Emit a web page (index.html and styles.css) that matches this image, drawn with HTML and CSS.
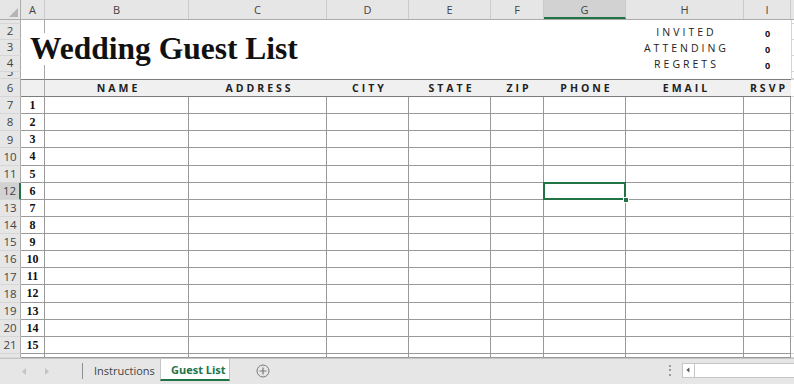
FILE: index.html
```html
<!DOCTYPE html>
<html>
<head>
<meta charset="utf-8">
<title>Wedding Guest List</title>
<link rel="stylesheet" href="styles.css">
</head>
<body>
<div class="sheet">
  <div class="grid colhead">
    <div class="corner"><svg width="20" height="19" viewBox="0 0 20 19"><polygon points="18,8 18,17 9,17" fill="#b4b4b4"/></svg></div>
    <div>A</div><div>B</div><div>C</div><div>D</div><div>E</div><div>F</div><div class="sel">G</div><div>H</div><div>I</div><div class="j"></div>
  </div>

  <div class="grid top">
    <div class="rh r1">1</div>
    <div class="rh r2">2</div>
    <div class="rh r3">3</div>
    <div class="rh r4">4</div>
    <div class="rh r5">5</div>
    <div class="title"><h1>Wedding Guest List</h1></div>
    <div class="lbl r2">INVITED</div>
    <div class="lbl r3">ATTENDING</div>
    <div class="lbl r4">REGRETS</div>
    <div class="val r2">0</div>
    <div class="val r3">0</div>
    <div class="val r4">0</div>
    <div class="jc r1"></div>
    <div class="jc r2"></div>
    <div class="jc r3"></div>
    <div class="jc r4"></div>
    <div class="jc r5"></div>
  </div>

  <div class="grid hdr">
    <div class="rh">6</div>
    <div class="hc a"></div>
    <div class="hc">NAME</div>
    <div class="hc">ADDRESS</div>
    <div class="hc">CITY</div>
    <div class="hc">STATE</div>
    <div class="hc">ZIP</div>
    <div class="hc">PHONE</div>
    <div class="hc">EMAIL</div>
    <div class="hc">RSVP</div>
    <div class="hc j"></div>
  </div>

  <div class="grid drow"><div class="rh">7</div><div class="c num">1</div><div class="c"></div><div class="c"></div><div class="c"></div><div class="c"></div><div class="c"></div><div class="c"></div><div class="c"></div><div class="c"></div><div class="c j"></div></div>
  <div class="grid drow"><div class="rh">8</div><div class="c num">2</div><div class="c"></div><div class="c"></div><div class="c"></div><div class="c"></div><div class="c"></div><div class="c"></div><div class="c"></div><div class="c"></div><div class="c j"></div></div>
  <div class="grid drow"><div class="rh">9</div><div class="c num">3</div><div class="c"></div><div class="c"></div><div class="c"></div><div class="c"></div><div class="c"></div><div class="c"></div><div class="c"></div><div class="c"></div><div class="c j"></div></div>
  <div class="grid drow"><div class="rh">10</div><div class="c num">4</div><div class="c"></div><div class="c"></div><div class="c"></div><div class="c"></div><div class="c"></div><div class="c"></div><div class="c"></div><div class="c"></div><div class="c j"></div></div>
  <div class="grid drow"><div class="rh">11</div><div class="c num">5</div><div class="c"></div><div class="c"></div><div class="c"></div><div class="c"></div><div class="c"></div><div class="c"></div><div class="c"></div><div class="c"></div><div class="c j"></div></div>
  <div class="grid drow"><div class="rh selrow">12</div><div class="c num">6</div><div class="c"></div><div class="c"></div><div class="c"></div><div class="c"></div><div class="c"></div><div class="c active"><span class="handle"></span></div><div class="c"></div><div class="c"></div><div class="c j"></div></div>
  <div class="grid drow"><div class="rh">13</div><div class="c num">7</div><div class="c"></div><div class="c"></div><div class="c"></div><div class="c"></div><div class="c"></div><div class="c"></div><div class="c"></div><div class="c"></div><div class="c j"></div></div>
  <div class="grid drow"><div class="rh">14</div><div class="c num">8</div><div class="c"></div><div class="c"></div><div class="c"></div><div class="c"></div><div class="c"></div><div class="c"></div><div class="c"></div><div class="c"></div><div class="c j"></div></div>
  <div class="grid drow"><div class="rh">15</div><div class="c num">9</div><div class="c"></div><div class="c"></div><div class="c"></div><div class="c"></div><div class="c"></div><div class="c"></div><div class="c"></div><div class="c"></div><div class="c j"></div></div>
  <div class="grid drow"><div class="rh">16</div><div class="c num">10</div><div class="c"></div><div class="c"></div><div class="c"></div><div class="c"></div><div class="c"></div><div class="c"></div><div class="c"></div><div class="c"></div><div class="c j"></div></div>
  <div class="grid drow"><div class="rh">17</div><div class="c num">11</div><div class="c"></div><div class="c"></div><div class="c"></div><div class="c"></div><div class="c"></div><div class="c"></div><div class="c"></div><div class="c"></div><div class="c j"></div></div>
  <div class="grid drow"><div class="rh">18</div><div class="c num">12</div><div class="c"></div><div class="c"></div><div class="c"></div><div class="c"></div><div class="c"></div><div class="c"></div><div class="c"></div><div class="c"></div><div class="c j"></div></div>
  <div class="grid drow"><div class="rh">19</div><div class="c num">13</div><div class="c"></div><div class="c"></div><div class="c"></div><div class="c"></div><div class="c"></div><div class="c"></div><div class="c"></div><div class="c"></div><div class="c j"></div></div>
  <div class="grid drow"><div class="rh">20</div><div class="c num">14</div><div class="c"></div><div class="c"></div><div class="c"></div><div class="c"></div><div class="c"></div><div class="c"></div><div class="c"></div><div class="c"></div><div class="c j"></div></div>
  <div class="grid drow"><div class="rh">21</div><div class="c num">15</div><div class="c"></div><div class="c"></div><div class="c"></div><div class="c"></div><div class="c"></div><div class="c"></div><div class="c"></div><div class="c"></div><div class="c j"></div></div>
  <div class="grid prow"><div class="rh">22</div><div class="c"></div><div class="c"></div><div class="c"></div><div class="c"></div><div class="c"></div><div class="c"></div><div class="c"></div><div class="c"></div><div class="c"></div><div class="c j"></div></div>
</div>

<div class="tabbar">
  <div class="nav"><svg width="82" height="25" viewBox="0 0 82 25"><polygon points="26,9 26,16 22,12.5" fill="#c4c4c4"/><polygon points="45,9 45,16 49,12.5" fill="#c4c4c4"/></svg></div>
  <div class="sep"></div>
  <div class="tab">Instructions</div>
  <div class="tab active">Guest List</div>
  <div class="plus"><svg width="14" height="14" viewBox="0 0 14 14"><circle cx="7" cy="7" r="6" fill="none" stroke="#7a7a7a" stroke-width="1"/><path d="M7 3.5V10.5M3.5 7H10.5" stroke="#7a7a7a" stroke-width="1.2"/></svg></div>
  <div class="hscroll">
    <div class="grip"><i></i><i></i><i></i></div>
    <div class="sbtn"><svg width="13" height="14" viewBox="0 0 13 14"><polygon points="7.5,4 7.5,10 4,7" fill="#555"/></svg></div>
    <div class="track"></div>
  </div>
</div>
</body>
</html>
```

FILE: styles.css
```css
* {
  box-sizing: border-box;
  margin: 0;
  padding: 0;
}

body {
  width: 794px;
  height: 384px;
  overflow: hidden;
  background: #ffffff;
  font-family: "Open Sans", "Noto Sans", sans-serif;
}

.sheet {
  height: 358px;
  overflow: hidden;
}

.grid {
  display: grid;
  grid-template-columns: 21px 24px 144px 138px 82px 82px 53px 82px 118px 47px 3px;
}

/* column letters */
.colhead {
  height: 20px;
  background: #e6e6e6;
  border-bottom: 1px solid #ababab;
}

.colhead > div {
  display: flex;
  align-items: center;
  justify-content: center;
  font-size: 11px;
  color: #444;
  border-right: 1px solid #cbcbcb;
}

.colhead > .corner {
  align-items: stretch;
  justify-content: flex-start;
  border-right: 1px solid #ababab;
}

.colhead > .sel {
  background: #d2d2d2;
  border-bottom: 2px solid #217346;
  padding-top: 2px;
}

.colhead > .j {
  border-right: none;
}

/* row headers */
.rh {
  display: flex;
  align-items: flex-end;
  justify-content: center;
  overflow: hidden;
  background: #e6e6e6;
  border-right: 1px solid #ababab;
  border-bottom: 1px solid #d6d6d6;
  font-size: 11.5px;
  line-height: 16px;
  color: #444;
  grid-column: 1;
}

/* title block rows 1-5 */
.top {
  grid-template-rows: 4px 16px 16px 16px 7px;
}

.r1 { grid-row: 1; }
.r2 { grid-row: 2; }
.r3 { grid-row: 3; }
.r4 { grid-row: 4; }
.r5 { grid-row: 5; }

.top .r5 {
  line-height: 13px;
}

.title {
  grid-column: 2 / 9;
  grid-row: 1 / 6;
  background-image: linear-gradient(to right, transparent 23px, #a9a9a9 23px, #a9a9a9 24px, transparent 24px);
  padding: 13px 0 0 9px;
  overflow: visible;
}

.title h1 {
  font-family: "Liberation Serif", "Times New Roman", serif;
  font-weight: bold;
  font-size: 31.5px;
  line-height: 1;
  color: #111;
  background: #ffffff;
  display: inline-block;
  white-space: nowrap;
}

.lbl {
  grid-column: 9;
  display: flex;
  align-items: center;
  justify-content: center;
  padding-left: 3px;
  font-size: 10.5px;
  letter-spacing: 3px;
  color: #222;
}

.val {
  grid-column: 10;
  display: flex;
  align-items: center;
  justify-content: center;
  font-family: "Open Sans", sans-serif;
  font-weight: bold;
  font-size: 9px;
  color: #111;
  padding-top: 2px;
}

.jc {
  grid-column: 11;
  border-left: 1px solid #d4d4d4;
  border-bottom: 1px solid #d4d4d4;
}

/* row 6 headings */
.hdr {
  height: 18px;
}

.hdr .rh {
  align-items: center;
  line-height: 1;
}

.hc {
  background: #f0f0f0;
  border-top: 1px solid #7c7c7c;
  border-bottom: 1px solid #7c7c7c;
  display: flex;
  align-items: center;
  justify-content: center;
  padding-left: 3px;
  font-size: 10.5px;
  font-weight: bold;
  letter-spacing: 3px;
  color: #222;
}

.hc.a {
  border-right: 1px solid #a9a9a9;
}

.hc.j {
  background: #ffffff;
  border-top-color: #d4d4d4;
  border-bottom-color: #d4d4d4;
}

/* data rows */
.drow {
  height: 17.133px;
}

.drow .rh {
  align-items: center;
  line-height: 1;
}

.c {
  border-right: 1px solid #999999;
  border-bottom: 1px solid #999999;
}

.c.j {
  border-right: none;
  border-bottom-color: #d4d4d4;
}

.num {
  display: flex;
  align-items: center;
  justify-content: center;
  font-family: "Liberation Serif", "Times New Roman", serif;
  font-weight: bold;
  font-size: 12px;
  color: #111;
  padding-top: 1px;
}

.rh.selrow {
  background: #d2d2d2;
  border-right: 2px solid #217346;
}

.c.active {
  position: relative;
}

.c.active::after {
  content: "";
  position: absolute;
  left: -1px;
  top: -1px;
  right: -1px;
  bottom: -1px;
  border: 2px solid #217346;
}

.handle {
  position: absolute;
  right: -4px;
  bottom: -4px;
  width: 6px;
  height: 6px;
  background: #217346;
  border: 1px solid #ffffff;
  z-index: 2;
}

.prow {
  height: 4px;
}

.prow .rh {
  align-items: flex-start;
  line-height: 16px;
}

/* sheet tabs */
.tabbar {
  height: 26px;
  background: #e6e6e6;
  border-top: 1px solid #c6c6c6;
  display: flex;
  align-items: stretch;
  font-family: "Open Sans", "Noto Sans", sans-serif;
}

.nav {
  width: 82px;
  display: flex;
  align-items: center;
}

.sep {
  width: 1px;
  margin: 4px 0 5px;
  background: #8f8f8f;
}

.tab {
  width: 77px;
  padding-left: 11px;
  display: flex;
  align-items: center;
  font-size: 11px;
  color: #444;
  margin-bottom: 3px;
}

.tab.active {
  width: 70px;
  padding-left: 10px;
  background: #ffffff;
  color: #217346;
  font-weight: bold;
  border-left: 1px solid #c6c6c6;
  border-right: 1px solid #c6c6c6;
  border-bottom: 2px solid #217346;
}

.plus {
  margin-left: 26px;
  display: flex;
  align-items: center;
  padding-bottom: 2px;
}

.hscroll {
  margin-left: auto;
  display: flex;
  align-items: center;
  padding-bottom: 3px;
}

.grip {
  width: 3px;
  height: 11px;
  display: flex;
  flex-direction: column;
  justify-content: space-between;
  align-items: center;
  margin-right: 11px;
}

.grip i {
  display: block;
  width: 2px;
  height: 2px;
  background: #9a9a9a;
}

.sbtn {
  width: 13px;
  height: 15px;
  background: #ffffff;
  border: 1px solid #c6c6c6;
  display: flex;
  align-items: center;
  justify-content: center;
}

.track {
  width: 99px;
  height: 15px;
  background: #ffffff;
  border-top: 1px solid #c6c6c6;
  border-bottom: 1px solid #c6c6c6;
}
```
